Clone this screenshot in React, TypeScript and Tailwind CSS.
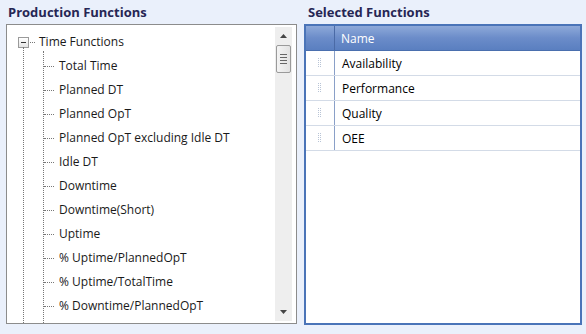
import React from "react";

const items = [
  "Total Time",
  "Planned DT",
  "Planned OpT",
  "Planned OpT excluding Idle DT",
  "Idle DT",
  "Downtime",
  "Downtime(Short)",
  "Uptime",
  "% Uptime/PlannedOpT",
  "% Uptime/TotalTime",
  "% Downtime/PlannedOpT",
];

const selected = ["Availability", "Performance", "Quality", "OEE"];

function Grip() {
  return (
    <svg width="4" height="10" viewBox="0 0 4 10">
      {[0, 2, 4, 6, 8].map((y) => (
        <React.Fragment key={y}>
          <rect x="0" y={y} width="1" height="1" fill="#b8c4d6" />
          <rect x="2" y={y} width="1" height="1" fill="#b8c4d6" />
        </React.Fragment>
      ))}
    </svg>
  );
}

export default function App() {
  return (
    <div
      className="w-[586px] h-[334px] bg-[#eaf0fb] text-[12px] text-[#1a1a1a] relative"
      style={{ fontFamily: '"Open Sans", "Noto Sans", sans-serif' }}
    >
      <div className="flex gap-[7px] pl-[6px] pt-[3px]">
        <div className="flex flex-col w-[291px]">
          <div className="h-[21px] pl-[2px] font-bold text-[13px] text-[#262654] leading-[18px]">
            Production Functions
          </div>
          <div className="h-[300px] border border-[#8c8c8c] bg-white flex relative">
            <div className="flex-1 relative overflow-hidden">
              <div className="absolute left-[16px] top-[22px] h-[280px] border-l border-dotted border-[#777]" />
              <div className="absolute left-[36px] top-[26px] h-[276px] border-l border-dotted border-[#777]" />
              <div className="pt-[5px]">
                <div className="h-[24px] flex items-center pl-[11px]">
                  <div className="w-[11px] h-[11px] border border-[#9a9a9a] bg-gradient-to-b from-white to-[#e4e4e4] flex items-center justify-center">
                    <div className="w-[5px] h-[1px] bg-[#333]" />
                  </div>
                  <div className="w-[5px] border-t border-dotted border-[#777] ml-[1px]" />
                  <span className="ml-[4px]">Time Functions</span>
                </div>
                {items.map((t) => (
                  <div key={t} className="h-[24px] flex items-center pl-[37px]">
                    <div className="w-[10px] border-t border-dotted border-[#777]" />
                    <span className="ml-[5px] whitespace-nowrap">{t}</span>
                  </div>
                ))}
              </div>
            </div>
            <div className="w-[17px] my-[2px] mr-[4px] bg-[#eeeeee] flex flex-col items-center">
              <div className="h-[18px] flex items-center justify-center">
                <svg width="7" height="4" viewBox="0 0 7 4">
                  <path d="M0 4 L3.5 0 L7 4 Z" fill="#444" />
                </svg>
              </div>
              <div className="w-[15px] h-[28px] border border-[#9a9a9a] rounded-[2px] bg-gradient-to-r from-[#f4f4f4] to-[#e2e2e2] flex flex-col items-center justify-center gap-[2px]">
                <div className="w-[7px] h-[1px] bg-[#666]" />
                <div className="w-[7px] h-[1px] bg-[#666]" />
                <div className="w-[7px] h-[1px] bg-[#666]" />
                <div className="w-[7px] h-[1px] bg-[#666]" />
              </div>
              <div className="flex-1" />
              <div className="h-[18px] flex items-center justify-center">
                <svg width="7" height="4" viewBox="0 0 7 4">
                  <path d="M0 0 L3.5 4 L7 0 Z" fill="#444" />
                </svg>
              </div>
            </div>
          </div>
        </div>
        <div className="flex flex-col w-[278px]">
          <div className="h-[21px] pl-[4px] font-bold text-[13px] text-[#262654] leading-[18px]">
            Selected Functions
          </div>
          <div className="h-[301px] border-2 border-[#4a74b8] bg-white flex flex-col">
            <div className="h-[25px] flex text-white bg-gradient-to-b from-[#8ea9d9] via-[#6b8cc9] to-[#5a7fc0] border-b border-[#4a6fae]">
              <div className="w-[29px] border-r border-[#4a6aa6]" />
              <div className="pl-[6px] pt-[1px] flex items-center">Name</div>
            </div>
            {selected.map((s) => (
              <div key={s} className="h-[25px] flex border-b border-[#d3dbe7]">
                <div className="w-[29px] border-r border-[#8aa0c8] flex items-center justify-center">
                  <Grip />
                </div>
                <div className="pl-[7px] pt-[2px] flex items-center text-black">{s}</div>
              </div>
            ))}
          </div>
        </div>
      </div>
    </div>
  );
}
